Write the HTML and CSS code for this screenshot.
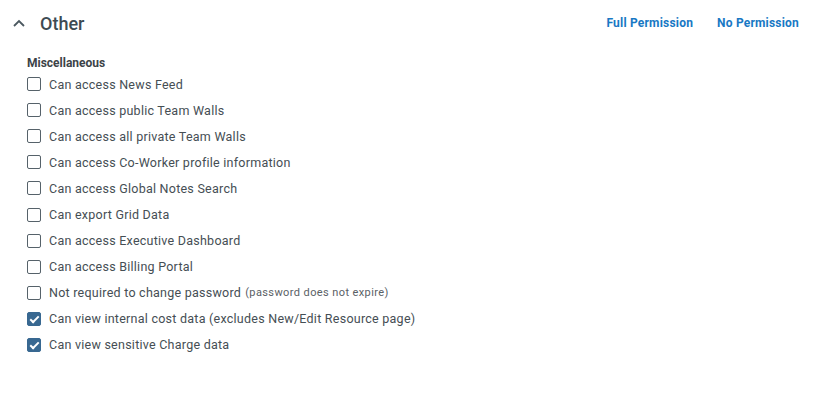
FILE: index.html
```html
<!DOCTYPE html>
<html lang="en">
<head>
    <meta charset="UTF-8">
    <title>Other</title>
    <link rel="stylesheet" href="styles.css">
</head>
<body>
    <div class="section">
        <div class="section-head">
            <div class="section-title">
                <svg class="chevron" width="12" height="8" viewBox="0 0 12 8"><path d="M1 7 L6 2 L11 7" fill="none" stroke="#4b5860" stroke-width="1.8"/></svg>
                <span>Other</span>
            </div>
            <div class="actions">
                <a href="#">Full Permission</a>
                <a href="#">No Permission</a>
            </div>
        </div>

        <div class="group">
            <h4>Miscellaneous</h4>
            <label class="perm"><input type="checkbox"><span class="box"></span>Can access News Feed</label>
            <label class="perm"><input type="checkbox"><span class="box"></span>Can access public Team Walls</label>
            <label class="perm"><input type="checkbox"><span class="box"></span>Can access all private Team Walls</label>
            <label class="perm"><input type="checkbox"><span class="box"></span>Can access Co-Worker profile information</label>
            <label class="perm"><input type="checkbox"><span class="box"></span>Can access Global Notes Search</label>
            <label class="perm"><input type="checkbox"><span class="box"></span>Can export Grid Data</label>
            <label class="perm"><input type="checkbox"><span class="box"></span>Can access Executive Dashboard</label>
            <label class="perm"><input type="checkbox"><span class="box"></span>Can access Billing Portal</label>
            <label class="perm"><input type="checkbox"><span class="box"></span>Not required to change password <small>(password does not expire)</small></label>
            <label class="perm"><input type="checkbox" checked><span class="box"></span>Can view internal cost data (excludes New/Edit Resource page)</label>
            <label class="perm"><input type="checkbox" checked><span class="box"></span>Can view sensitive Charge data</label>
        </div>
    </div>
</body>
</html>
```

FILE: styles.css
```css
body {
    margin: 0;
    font-family: Roboto, "Liberation Sans", sans-serif;
    background-color: #ffffff;
    color: #3c4850;
}

.section {
    padding: 10px 26px 0 13px;
}

.section-head {
    display: flex;
    justify-content: space-between;
    align-items: center;
    height: 26px;
}

.section-title {
    display: flex;
    align-items: center;
    font-size: 18px;
    font-weight: 500;
    color: #3d4b53;
}

.chevron {
    margin-right: 15px;
}

.actions {
    display: flex;
    gap: 24px;
}

.actions a {
    color: #1878c4;
    font-size: 12px;
    font-weight: 700;
    letter-spacing: 0.2px;
    text-decoration: none;
}

.group {
    padding: 20px 0 0 14px;
}

.group h4 {
    margin: 0 0 1px;
    font-size: 12px;
    font-weight: 700;
    color: #3c4347;
    line-height: 14px;
}

.perm {
    display: flex;
    align-items: center;
    height: 26.1px;
    font-size: 12.5px;
    letter-spacing: 0.25px;
    color: #454e54;
    cursor: pointer;
}

.perm input {
    display: none;
}

.perm small {
    font-size: 11px;
    color: #5a6166;
    margin-left: 4px;
    letter-spacing: 0.4px;
}

.box {
    width: 12px;
    height: 12px;
    border: 1px solid #56626a;
    border-radius: 2px;
    margin-right: 8px;
    flex-shrink: 0;
    position: relative;
}

.perm input:checked + .box {
    background-color: #386891;
    border-color: #386891;
}

.perm input:checked + .box::after {
    content: "";
    position: absolute;
    left: 4px;
    top: 1px;
    width: 3px;
    height: 7px;
    border: solid #ffffff;
    border-width: 0 2px 2px 0;
    transform: rotate(45deg);
}
```
